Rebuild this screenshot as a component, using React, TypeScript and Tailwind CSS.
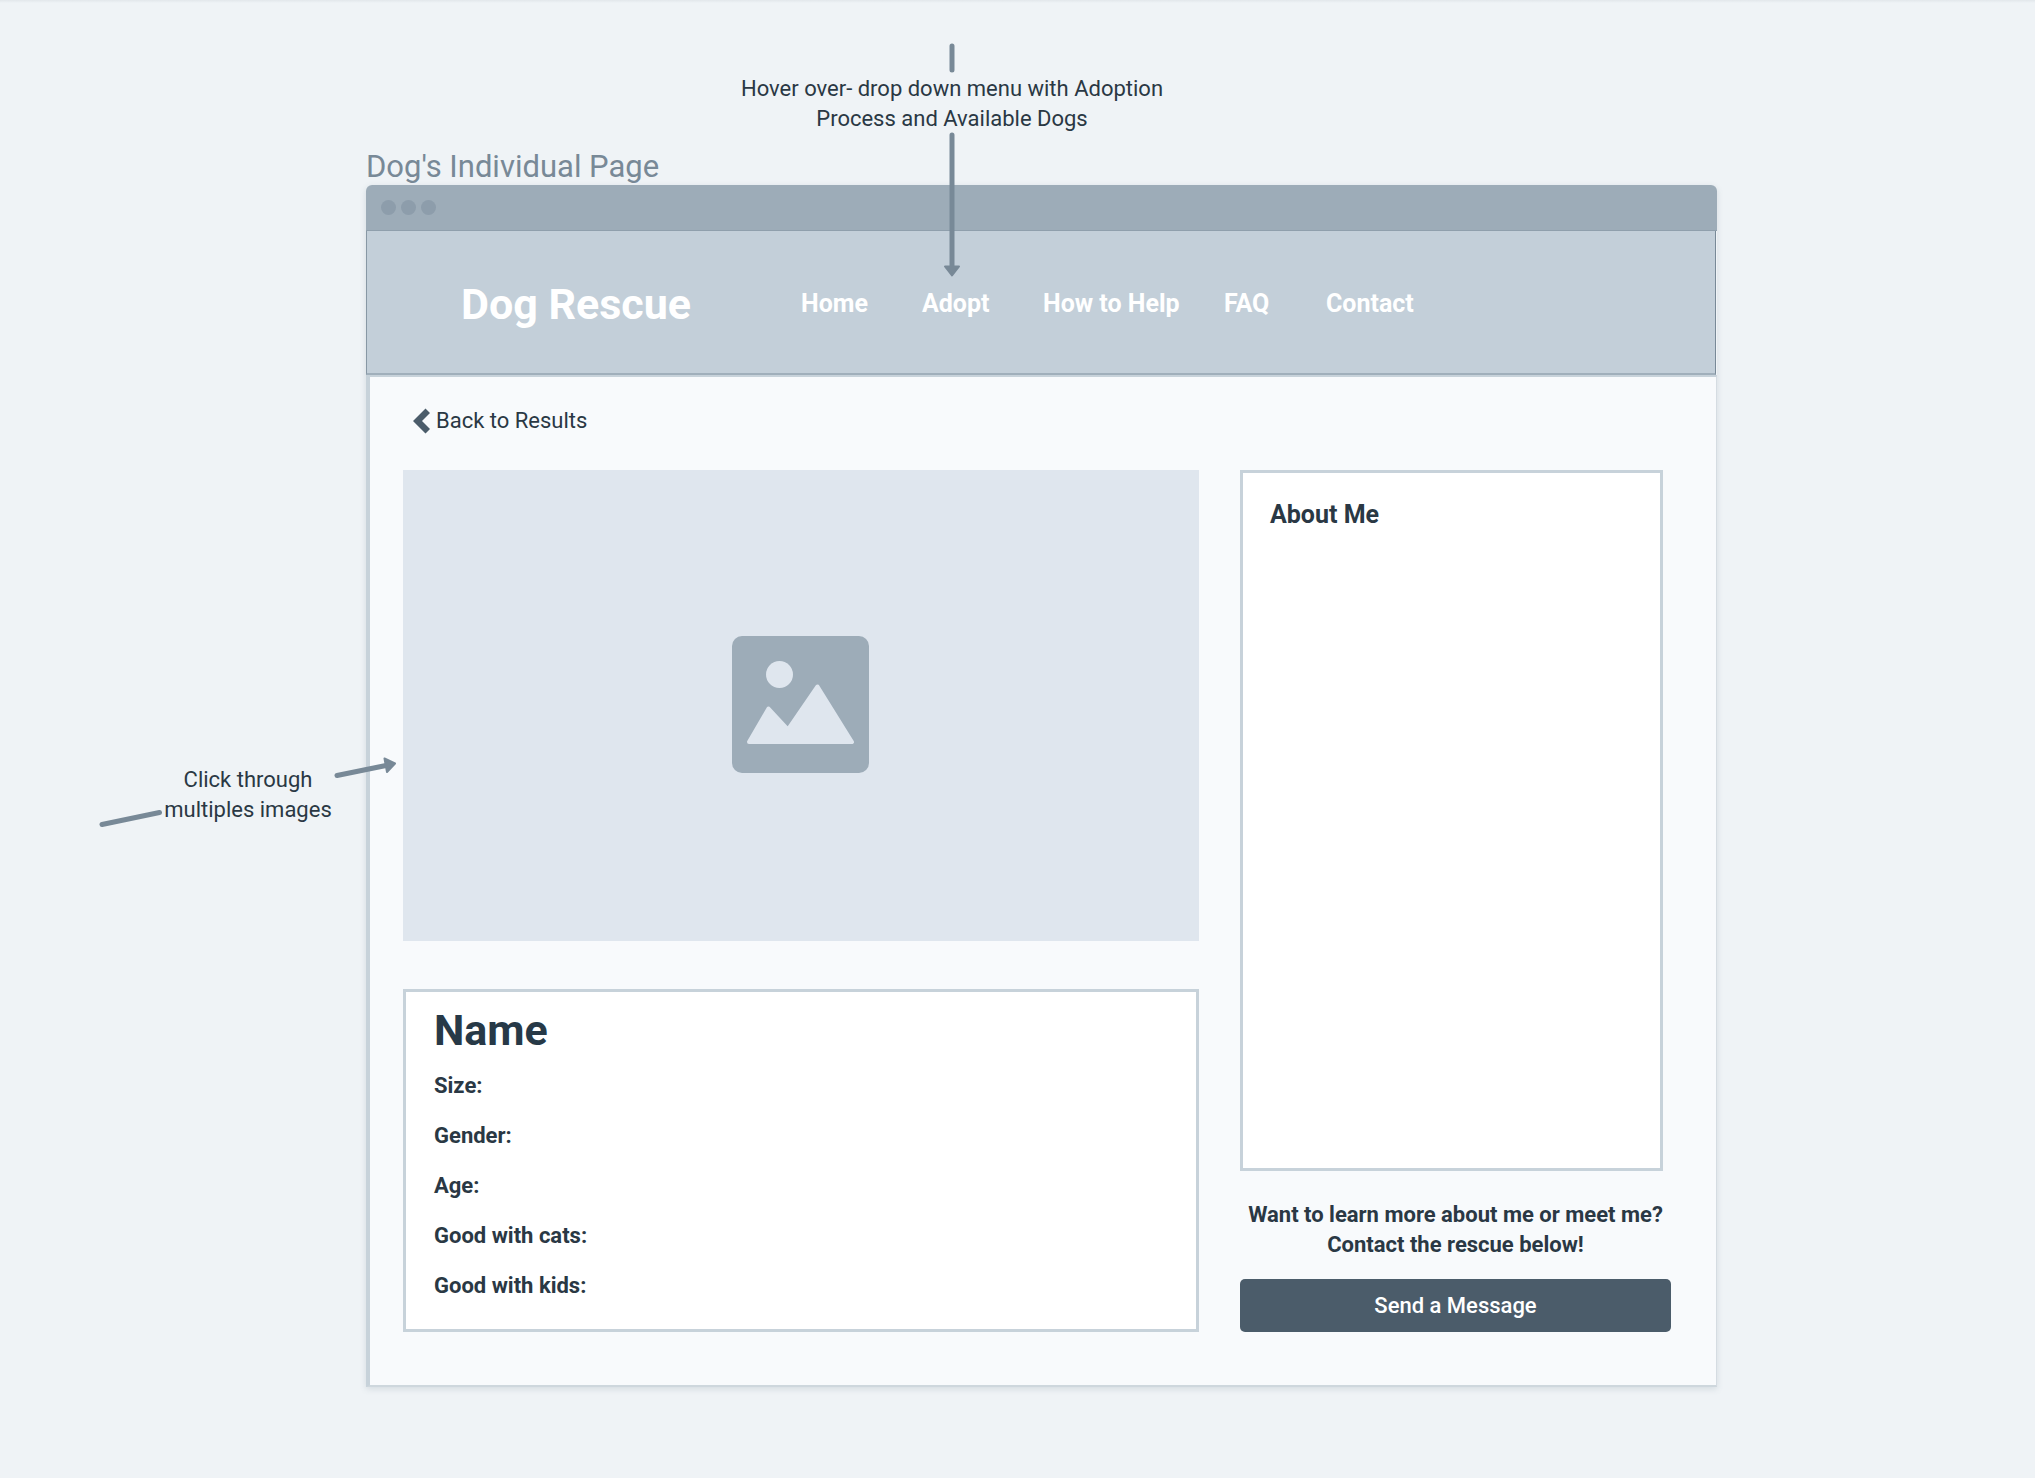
import React from 'react';

interface NavItem {
  label: string;
  className: string;
}

const navItems: NavItem[] = [
  { label: 'Home', className: 'w-[121px]' },
  { label: 'Adopt', className: 'w-[121px]' },
  { label: 'How to Help', className: 'w-[181px]' },
  { label: 'FAQ', className: 'w-[102px]' },
  { label: 'Contact', className: '' },
];

const details = ['Size:', 'Gender:', 'Age:', 'Good with cats:', 'Good with kids:'];

const MenuNote: React.FC = () => (
  <div className="relative ml-[731px] w-[442px] pt-[71px] text-center">
    <p>
      Hover over- drop down menu with Adoption
      <br />
      Process and Available Dogs
    </p>
    {/* Arrow down to the Adopt link */}
    <svg className="pointer-events-none absolute left-[211px] -top-[3px] z-10" width="20" height="280" viewBox="0 0 20 280" fill="none">
      <path d="M10 46V70M10 135V267" stroke="#788997" strokeWidth="5" strokeLinecap="round" />
      <path d="M3 266.500H17L10 275.500Z" fill="#788997" stroke="#788997" strokeWidth="2" strokeLinejoin="round" />
    </svg>
  </div>
);

const GalleryNote: React.FC = () => (
  <aside className="relative w-[366px] shrink-0 pt-[580px]">
    <p className="ml-[130px] text-center">
      Click through
      <br />
      multiples images
    </p>
    {/* Arrow over to the gallery */}
    <svg className="pointer-events-none absolute left-[90px] top-[560px] z-10" width="320" height="90" viewBox="90 745 320 90" fill="none">
      <path d="M102 824.500L159.500 812.500M337 775.500L386 765.500" stroke="#788997" strokeWidth="5" strokeLinecap="round" />
      <path d="M384.500 758.500L395 763.500L387 772Z" fill="#788997" stroke="#788997" strokeWidth="2" strokeLinejoin="round" />
    </svg>
  </aside>
);

const ImagePlaceholder: React.FC = () => (
  <div className="flex h-[471px] items-center justify-center bg-[#dfe6ee] pb-[2px] pr-[2px]">
    <svg width="137" height="137" viewBox="0 0 137 137" fill="none">
      <rect width="137" height="137" rx="10" fill="#9dacb8" />
      <circle cx="47.500" cy="38.500" r="13.500" fill="#dfe6ee" />
      <path d="M17 106L36.500 72.500L56 93.500L85.500 50.500L120 106Z" fill="#dfe6ee" stroke="#dfe6ee" strokeWidth="4" strokeLinejoin="round" />
    </svg>
  </div>
);

const App: React.FC = () => {
  return (
    <div className="min-h-screen bg-[#eff3f6] font-['Roboto',sans-serif] text-[22px] leading-[30px] text-[#2a3844]">
      <div className="h-[3px] bg-linear-to-b from-[#e2e7eb] to-[#eff3f6]"></div>
      <MenuNote />
      <h1 className="ml-[366px] mt-3 h-[39px] text-[31px] leading-[42px] text-[#788997]">Dog's Individual Page</h1>

      <div className="flex pb-[92px] pr-[318px]">
        <GalleryNote />

        <div className="flex-1 rounded-t-[6px] shadow-[0_2px_6px_rgba(90,110,130,0.18)]">
          {/* Window bar */}
          <div className="flex h-[46px] items-center gap-[5px] rounded-t-[6px] border-b border-[#8f9fac] bg-[#9dacb8] pl-[15px]">
            <span className="size-[15px] rounded-full bg-[#8d9dab]"></span>
            <span className="size-[15px] rounded-full bg-[#8d9dab]"></span>
            <span className="size-[15px] rounded-full bg-[#8d9dab]"></span>
          </div>

          <header className="mr-px flex h-[144px] items-center border-x border-b-2 border-l-[#8797a4] border-r-[#788997] border-b-[#a0afbb] bg-[#c3cfd9] pl-[94px] pt-1 font-bold text-white">
            <div className="w-[340px] text-[43px] leading-[52px]">Dog Rescue</div>
            <nav className="flex text-[25px] leading-[36px]">
              {navItems.map(item => (
                <a key={item.label} href="#" className={item.className}>{item.label}</a>
              ))}
            </nav>
          </header>

          <main className="border-b-2 border-l-4 border-r border-t-2 border-b-[#ced7dd] border-l-[#c7d2da] border-r-[#d5dce2] border-t-[#c7d2da] bg-[#f8fafc] pb-[53px] pl-[33px] pr-[45px] pt-[29px]">
            <a href="#" className="ml-[10px] flex w-fit items-center gap-[6px]">
              <svg width="17" height="26" viewBox="0 0 17 26">
                <path d="M12.500 0.500L17 5L9 13L17 21L12.500 25.500L0 13Z" fill="#4b5c6a" />
              </svg>
              Back to Results
            </a>

            <div className="mt-[34px] flex gap-[41px]">
              <section className="flex flex-1 flex-col gap-12">
                <ImagePlaceholder />
                <div className="border-[3px] border-[#c7d2da] bg-white pb-7 pl-[28px] pt-[10px]">
                  <h2 className="text-[43px] font-bold leading-[57px] text-[#273947]">Name</h2>
                  <ul className="mt-3 flex flex-col gap-5 font-bold">
                    {details.map(label => (
                      <li key={label}>{label}</li>
                    ))}
                  </ul>
                </div>
              </section>

              <section className="flex w-[431px] flex-col">
                <div className="mr-2 flex-1 border-[3px] border-[#c7d2da] bg-white px-[27px] pt-[24px]">
                  <h3 className="text-[25px] font-bold leading-[36px]">About Me</h3>
                </div>
                <p className="mt-[29px] text-center font-bold">
                  Want to learn more about me or meet me?
                  <br />
                  Contact the rescue below!
                </p>
                <button className="mt-[19px] h-[53px] rounded-[5px] bg-[#4b5c6a] font-medium text-white">Send a Message</button>
              </section>
            </div>
          </main>
        </div>
      </div>
    </div>
  );
};

export default App;
